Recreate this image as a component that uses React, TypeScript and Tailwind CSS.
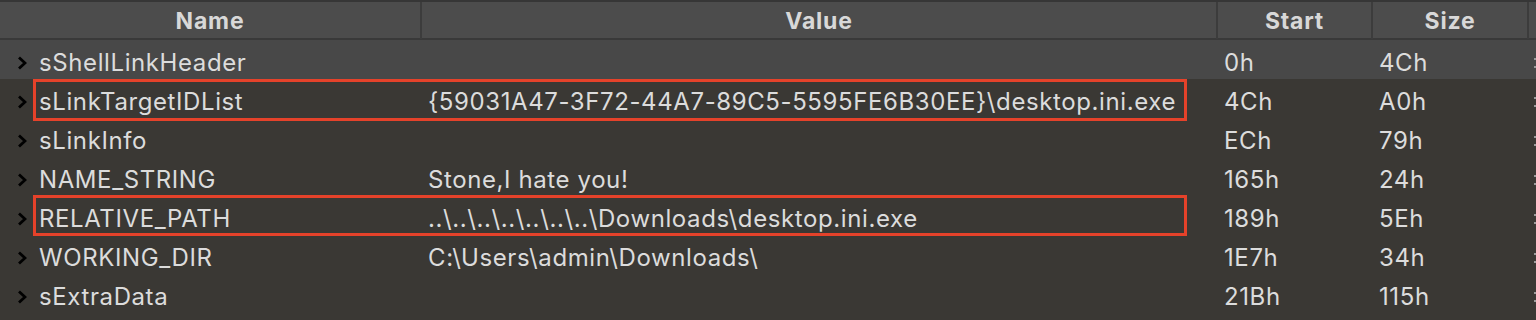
import React from "react";

type Row = { name: string; value: string; start: string; size: string; mark?: "a" | "b" };

const rows: Row[] = [
  { name: "sShellLinkHeader", value: "", start: "0h", size: "4Ch" },
  { name: "sLinkTargetIDList", value: "{59031A47-3F72-44A7-89C5-5595FE6B30EE}\\desktop.ini.exe", start: "4Ch", size: "A0h", mark: "a" },
  { name: "sLinkInfo", value: "", start: "ECh", size: "79h" },
  { name: "NAME_STRING", value: "Stone,I hate you!", start: "165h", size: "24h" },
  { name: "RELATIVE_PATH", value: "..\\..\\..\\..\\..\\..\\..\\Downloads\\desktop.ini.exe", start: "189h", size: "5Eh", mark: "b" },
  { name: "WORKING_DIR", value: "C:\\Users\\admin\\Downloads\\", start: "1E7h", size: "34h" },
  { name: "sExtraData", value: "", start: "21Bh", size: "115h" },
];

const cols = "grid grid-cols-[422px_796px_155px_156px_1fr]";

function Chevron() {
  return (
    <svg width="10" height="14" viewBox="0 0 10 14" className="shrink-0">
      <path d="M2 1.5 L8 7 L2 12.5" fill="none" stroke="#000000" strokeWidth="2.8" strokeLinejoin="miter" />
    </svg>
  );
}

export default function App() {
  return (
    <div className="w-[1536px] h-[320px] overflow-hidden bg-[#3a3834] text-[#dcdcdc] text-[24px] tracking-[0.6px] font-['Inter','Liberation_Sans',sans-serif]">
      <div className="pt-[2px] bg-[#363636]">
        <div className={`${cols} h-[38px] bg-[#4c4c4c] border-b-2 border-[#393939] text-[23px] font-bold tracking-[0.8px] text-[#d8d8d8]`}>
          <div className="flex items-center justify-center pt-[2px] border-r-2 border-[#3c3c3c]">Name</div>
          <div className="flex items-center justify-center pt-[2px] border-r-2 border-[#3c3c3c]">Value</div>
          <div className="flex items-center justify-center pt-[2px] border-r-2 border-[#3c3c3c]">Start</div>
          <div className="flex items-center justify-center pt-[2px] border-r-2 border-[#3c3c3c]">Size</div>
          <div />
        </div>
      </div>
      {rows.map((r, i) => (
        <div key={r.name} className={`${cols} relative h-[39px] ${i === 0 ? "bg-[#484848]" : ""}`}>
          <div className="flex items-center gap-[12px] pl-[17px] pt-[5px] whitespace-nowrap">
            <Chevron />
            <span>{r.name}</span>
          </div>
          <div className="flex items-center pl-[6px] pt-[5px] whitespace-nowrap">{r.value}</div>
          <div className="flex items-center pl-[6px] pt-[5px]">{r.start}</div>
          <div className="flex items-center pl-[6px] pt-[5px]">{r.size}</div>
          <div className="flex flex-col justify-center gap-[6px] pl-[5px] pt-[5px]">
            <div className="w-[2px] h-[2px] bg-[#9a9a9a]" />
            <div className="w-[2px] h-[2px] bg-[#9a9a9a]" />
          </div>
          {r.mark === "a" && (
            <div className="absolute left-[33px] w-[1154px] top-[0px] h-[42px] border-[3px] border-[#e5422a]" />
          )}
          {r.mark === "b" && (
            <div className="absolute left-[33px] w-[1154px] top-[-1px] h-[41px] border-[3px] border-[#e5422a]" />
          )}
        </div>
      ))}
    </div>
  );
}
